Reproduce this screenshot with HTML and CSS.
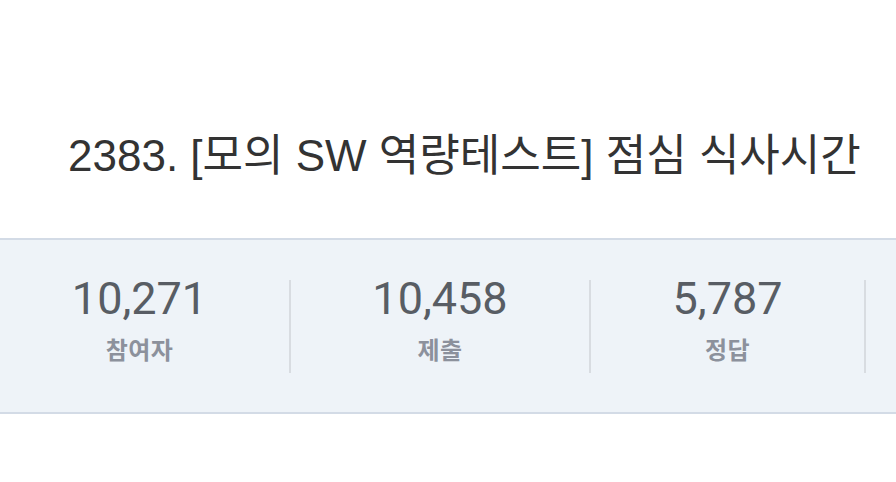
FILE: index.html
```html
<!DOCTYPE html>
<html lang="ko">
<head>
  <meta charset="UTF-8">
  <meta name="viewport" content="width=device-width, initial-scale=1">
  <title>2383. [모의 SW 역량테스트] 점심 식사시간</title>
  <link rel="stylesheet" href="styles.css">
</head>
<body>
  <div class="problem-head">
    <h2 class="problem-title">2383. [모의 SW 역량테스트] 점심 식사시간</h2>
  </div>

  <div class="problem-stats">
    <ul class="stat-list">
      <li class="stat-item">
        <span class="stat-num">10,271</span>
        <span class="stat-label">참여자</span>
      </li>
      <li class="stat-item">
        <span class="stat-num">10,458</span>
        <span class="stat-label">제출</span>
      </li>
      <li class="stat-item">
        <span class="stat-num">5,787</span>
        <span class="stat-label">정답</span>
      </li>
      <li class="stat-item stat-rest"></li>
    </ul>
  </div>
</body>
</html>
```

FILE: styles.css
```css
* {
  margin: 0;
  padding: 0;
  box-sizing: border-box;
}

html, body {
  height: 100%;
  background: #fff;
  overflow: hidden;
}

body {
  font-family: "Liberation Sans", "Noto Sans CJK KR", sans-serif;
}

.problem-head {
  padding: 130px 0 0 68px;
  height: 238px;
}

.problem-title {
  font-size: 44px;
  line-height: 52px;
  font-weight: normal;
  color: #333;
  white-space: nowrap;
}

.problem-stats {
  background: #eef3f8;
  border-top: 2px solid #d3dbe6;
  border-bottom: 2px solid #d3dbe6;
  padding: 40px 0 39px;
}

.stat-list {
  list-style: none;
  display: grid;
  grid-template-columns: 301px 300px 275px 1fr;
  margin-left: -10px;
}

.stat-item {
  height: 93px;
  border-right: 2px solid #d8dce1;
  display: flex;
  flex-direction: column;
  align-items: center;
}

.stat-rest {
  border-right: none;
}

.stat-num {
  font-family: Roboto, "Noto Sans", sans-serif;
  font-size: 45px;
  line-height: 40px;
  color: #585d64;
  margin-top: -1px;
}

.stat-label {
  font-family: "Noto Sans CJK KR", sans-serif;
  font-size: 24px;
  font-weight: bold;
  line-height: 28px;
  letter-spacing: 0.5px;
  color: #8c919c;
  margin-top: 16px;
}
```
